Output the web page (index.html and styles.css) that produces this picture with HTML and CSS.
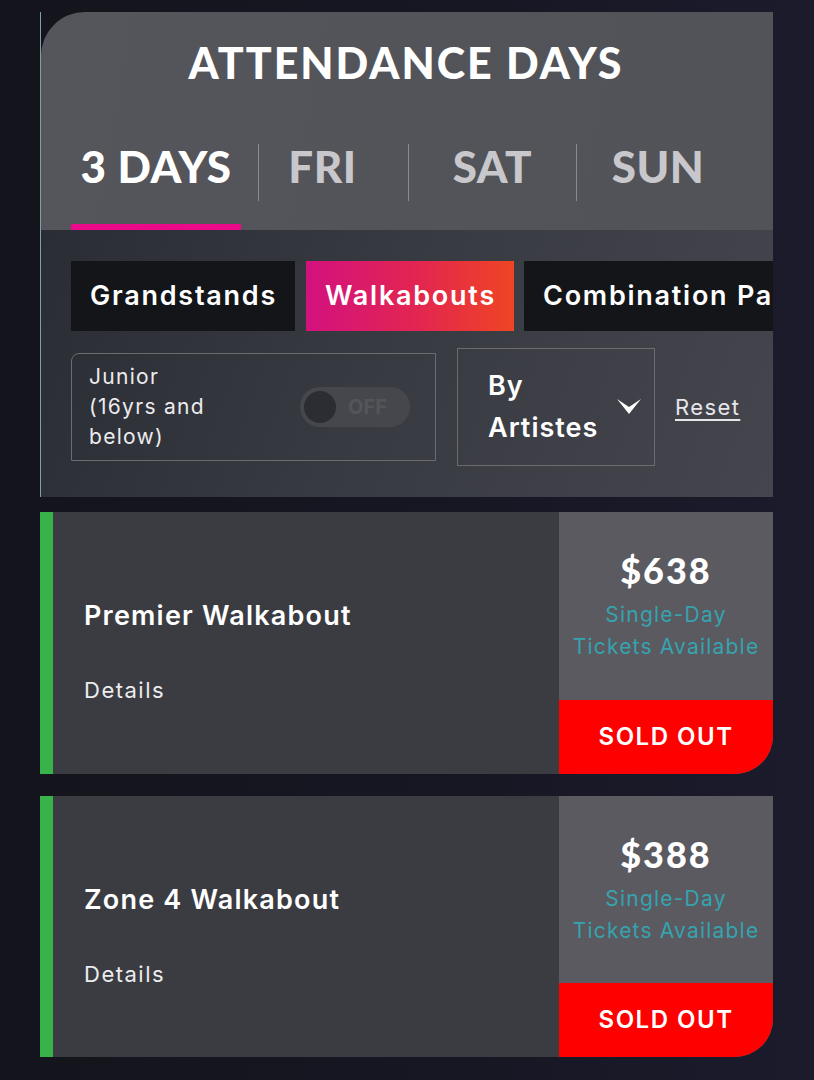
FILE: index.html
```html
<!DOCTYPE html>
<html>
<head>
<meta charset="utf-8">
<link rel="stylesheet" href="styles.css">
</head>
<body>
<div class="page">
  <div class="panel-wrap">
    <div class="panel">
      <div class="days-head">
        <h1 class="title">ATTENDANCE DAYS</h1>
        <div class="day-tabs">
          <div class="day-tab t1 active">3 DAYS</div>
          <div class="sep s1"></div>
          <div class="day-tab t2">FRI</div>
          <div class="sep"></div>
          <div class="day-tab t3">SAT</div>
          <div class="sep"></div>
          <div class="day-tab t4">SUN</div>
        </div>
      </div>
      <div class="filters">
        <div class="cats">
          <div class="cat">Grandstands</div>
          <div class="cat on">Walkabouts</div>
          <div class="cat last">Combination Packages</div>
        </div>
        <div class="filter-row">
          <div class="junior">
            <div class="junior-text">Junior<br>(16yrs and<br>below)</div>
            <div class="toggle"><span class="knob"></span><span class="off">OFF</span></div>
          </div>
          <div class="select">
            <div class="select-text">By<br>Artistes</div>
            <svg class="chev" width="26" height="22" viewBox="0 0 26 22"><path d="M1 4 L13 19 L25 4 L13 12 Z" fill="#ffffff"/></svg>
          </div>
          <a class="reset">Reset</a>
        </div>
      </div>
    </div>
  </div>

  <div class="card c1">
    <div class="card-main">
      <div class="card-name">Premier Walkabout</div>
      <div class="card-details">Details</div>
    </div>
    <div class="card-side">
      <div class="price-box">
        <div class="price">$638</div>
        <div class="avail">Single-Day<br>Tickets Available</div>
      </div>
      <div class="sold">SOLD OUT</div>
    </div>
  </div>

  <div class="card c2">
    <div class="card-main">
      <div class="card-name">Zone 4 Walkabout</div>
      <div class="card-details">Details</div>
    </div>
    <div class="card-side">
      <div class="price-box">
        <div class="price">$388</div>
        <div class="avail">Single-Day<br>Tickets Available</div>
      </div>
      <div class="sold">SOLD OUT</div>
    </div>
  </div>
</div>
</body>
</html>
```

FILE: styles.css
```css
html, body {
  margin: 0;
  padding: 0;
}
body {
  width: 814px;
  height: 1080px;
  overflow: hidden;
  background: linear-gradient(90deg, #14141c 0%, #171724 60%, #1c1b2c 100%);
  font-family: Inter, "Open Sans", sans-serif;
  color: #ffffff;
}
.page {
  padding: 12px 41px 0 40px;
}
.panel-wrap {
  border-left: 1px solid #7aa2a8;
}
.panel {
  border-top-left-radius: 44px;
  overflow: hidden;
}
.days-head {
  height: 218px;
  background: linear-gradient(100deg, #55565b 0%, #535459 50%, #525358 100%);
  display: flex;
  flex-direction: column;
}
.title {
  margin: 0;
  padding-top: 31px;
  text-align: center;
  font-family: Lato, sans-serif;
  font-weight: 900;
  font-size: 43px;
  line-height: 40px;
  letter-spacing: 2px;
  color: #ffffff;
  padding-right: 2px;
}
.day-tabs {
  margin-top: auto;
  display: flex;
  align-items: flex-start;
  height: 86px;
  padding-left: 30px;
}
.day-tab {
  height: 80px;
  font-family: Lato, sans-serif;
  font-weight: 900;
  font-size: 44px;
  line-height: 44px;
  letter-spacing: 0.5px;
  color: #c8c8cc;
  text-align: center;
}
.t1 { width: 170px; height: 80px; color: #ffffff; border-bottom: 6px solid #ea0a8a; }
.t2 { width: 127px; margin-right: 22px; }
.t3 { width: 167px; }
.t4 { width: 162px; }
.sep {
  width: 1px;
  height: 57px;
  background: #8a8b90;
}
.s1 { margin-left: 17px; }

.filters {
  height: 267px;
  background: linear-gradient(110deg, #2b2d34 0%, #383a41 45%, #45464d 100%);
  padding-left: 30px;
  box-sizing: border-box;
  padding-top: 31px;
}
.cats {
  display: flex;
  gap: 10px;
  overflow: hidden;
  white-space: nowrap;
}
.cat {
  height: 70px;
  line-height: 70px;
  padding: 0 18px 0 19px;
  background: #141518;
  font-size: 27px;
  font-weight: 600;
  letter-spacing: 1.75px;
  color: #ffffff;
  flex: none;
}
.cat:first-child { margin-right: 1px; }
.cat.on {
  background: linear-gradient(90deg, #d3117f 0%, #e3264f 55%, #ef4523 100%);
}
.filter-row {
  margin-top: 17px;
  display: flex;
  align-items: center;
}
.junior {
  width: 365px;
  height: 108px;
  box-sizing: border-box;
  border: 1px solid #6b6c72;
  border-top-left-radius: 8px;
  display: flex;
  align-items: center;
  justify-content: space-between;
  padding: 0 25px 0 17px;
}
.junior-text {
  font-size: 21px;
  line-height: 30px;
  color: #ececef;
  letter-spacing: 1.3px;
}
.toggle {
  width: 110px;
  height: 40px;
  border-radius: 20px;
  background: #46474c;
  display: flex;
  align-items: center;
  padding: 0 4px;
  box-sizing: border-box;
  gap: 12px;
  flex: none;
}
.knob {
  width: 32px;
  height: 32px;
  border-radius: 50%;
  background: #2c2d32;
}
.off {
  font-size: 20px;
  font-weight: 700;
  color: #54555a;
}
.select {
  margin-left: 21px;
  width: 198px;
  height: 118px;
  box-sizing: border-box;
  border: 1px solid #6b6c72;
  display: flex;
  align-items: center;
  justify-content: space-between;
  padding: 0 12px 0 30px;
}
.select-text {
  font-size: 27px;
  line-height: 42px;
  font-weight: 600;
  letter-spacing: 1px;
  color: #ffffff;
}
.chev { margin-top: -2px; }
.reset {
  margin-left: 20px;
  font-size: 22px;
  color: #e6e6ea;
  text-decoration: underline;
  text-underline-offset: 4px;
  text-decoration-thickness: 2px;
  letter-spacing: 1.4px;
}

.card {
  display: flex;
  height: 262px;
  border-left: 13px solid #38b349;
  border-bottom-right-radius: 38px;
  overflow: hidden;
  background: #3b3c42;
}
.c1 { margin-top: 15px; }
.c2 { margin-top: 22px; height: 261px; }
.card-main {
  flex: 1;
  padding-left: 31px;
  display: flex;
  flex-direction: column;
  justify-content: center;
  padding-top: 16px;
  gap: 45px;
}
.card-name {
  font-size: 27px;
  font-weight: 600;
  letter-spacing: 1.2px;
  color: #ffffff;
}
.card-details {
  font-size: 22px;
  color: #ececef;
  letter-spacing: 1.5px;
}
.card-side {
  width: 214px;
  display: flex;
  flex-direction: column;
  background: #5a5a60;
}
.price-box {
  flex: 1;
  text-align: center;
  padding-top: 38px;
  box-sizing: border-box;
}
.price {
  font-family: Lato, sans-serif;
  font-weight: 900;
  font-size: 36px;
  line-height: 40px;
  letter-spacing: 2px;
  color: #ffffff;
}
.avail {
  margin-top: 9px;
  font-size: 21px;
  line-height: 32px;
  color: #36a3af;
  letter-spacing: 1.2px;
}
.sold {
  height: 74px;
  line-height: 74px;
  background: #ff0000;
  text-align: center;
  font-size: 24px;
  font-weight: 600;
  color: #ffffff;
  letter-spacing: 1.5px;
}
```
